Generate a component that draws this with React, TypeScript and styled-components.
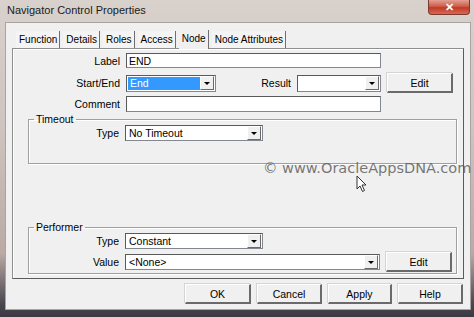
import * as React from 'react';
import styled, {createGlobalStyle} from 'styled-components';

const GlobalStyle = createGlobalStyle`
    html, body { margin: 0; padding: 0; background: #3b3a42; }
    body { font-family: "Liberation Sans", Arial, sans-serif; font-size: 10.5px; color: #000; }
`;

const Frame = styled.div`
    position: relative; width: 474px; height: 317px; overflow: hidden;
    display: flex; flex-direction: column;
    background: linear-gradient(180deg, #d9d1cc 0%, #cfc4bf 40%, #b9aaa4 80%, #4a4650 96%, #3a3842 100%);
`;

const TitleBar = styled.div`
    height: 22px; display: flex; align-items: flex-start; padding-left: 7px;
`;

const Title = styled.div`
    margin-top: 4px; font-size: 11px; color: #1a1a1a;
`;

const CloseButton = styled.div`
    margin-left: auto; margin-right: 4px; width: 42px; height: 15px;
    border: 1px solid #7a3a32; border-top: none; border-radius: 0 0 4px 4px;
    background: linear-gradient(180deg, #e3a092 0%, #cf5d48 45%, #c0392a 55%, #d8684f 100%);
    display: flex; align-items: center; justify-content: center;
    color: #fff; font-weight: bold; font-size: 11px; box-sizing: border-box;
`;

const Client = styled.div`
    margin: 0 3px 0 5px; height: 288px; background: #f0f0f0;
    border: 1px solid #a9a4a3; box-sizing: border-box;
    padding: 7px 6px 0 6px; display: flex; flex-direction: column;
`;

const TabStrip = styled.div`
    display: flex; align-items: flex-end; height: 18px; padding-left: 4px; font-size: 10px;
`;

const Tab = styled.div<{$active?: boolean}>`
    height: ${p => p.$active ? 19 : 17}px; padding: 0 2px 0 3px; margin-right: 3px;
    display: flex; align-items: center; box-sizing: border-box;
    background: ${p => p.$active ? '#f0f0f0' : '#f4f4f4'};
    border-right: 1px solid #6f6f6f;
    margin-bottom: ${p => p.$active ? -1 : 0}px;
    position: relative; z-index: ${p => p.$active ? 2 : 1};
    padding-bottom: ${p => p.$active ? 3 : 0}px;
`;

const Panel = styled.div`
    position: relative; height: 231px; box-sizing: border-box;
    border: 1px solid #8e8f8f; border-right-color: #5b5b5b; border-bottom-color: #5b5b5b;
    box-shadow: inset 1px 1px 0 #fff;
    padding-top: 4px; display: flex; flex-direction: column;
`;

const Row = styled.div<{$mt?: number}>`
    display: flex; align-items: center; margin-top: ${p => p.$mt ?? 0}px;
`;

const FieldLabel = styled.div<{$w: number}>`
    width: ${p => p.$w}px; text-align: right; margin-right: 6px; flex-shrink: 0;
`;

const TextBox = styled.div<{$w: number; $h?: number}>`
    width: ${p => p.$w}px; height: ${p => p.$h ?? 16}px; box-sizing: border-box;
    background: #fff; border: 1px solid #828790; border-top-color: #5a5a5a; border-left-color: #5a5a5a;
    display: flex; align-items: center; padding-left: 2px;
`;

const Select = styled(TextBox)`
    padding-left: 1px; padding-right: 1px;
`;

const SelectValue = styled.div<{$selected?: boolean}>`
    flex: 1; height: 13px; display: flex; align-items: center; padding-left: 2px;
    background: ${p => p.$selected ? '#3399ff' : 'transparent'};
    color: ${p => p.$selected ? '#fff' : '#000'};
`;

const DropButton = styled.div`
    width: 14px; height: 14px; box-sizing: border-box; background: #f0f0f0;
    border: 1px solid #fff; border-right-color: #6a6a6a; border-bottom-color: #6a6a6a;
    display: flex; align-items: center; justify-content: center;
    &::after {
        content: ''; width: 0; height: 0;
        border-left: 3px solid transparent; border-right: 3px solid transparent; border-top: 3px solid #000;
    }
`;

const Button = styled.div<{$w: number}>`
    width: ${p => p.$w}px; height: 20px; box-sizing: border-box; flex-shrink: 0;
    background: #f0f0f0; border: 1px solid #fff;
    border-right: 2px solid #6a6a6a; border-bottom: 2px solid #6a6a6a;
    box-shadow: -1px -1px 0 #d4d4d4;
    display: flex; align-items: center; justify-content: center;
`;

const Group = styled.fieldset<{$h: number}>`
    margin: 0 0 0 15px; width: 429px; height: ${p => p.$h}px; box-sizing: border-box;
    border: 1px solid #a0a0a0; box-shadow: 1px 1px 0 #fff, inset 1px 1px 0 #fff;
    padding: 0; display: flex; flex-direction: column;
`;

const Legend = styled.legend`
    padding: 0 2px; margin-left: 5px; font-size: 10.5px; line-height: 11px;
`;

const Spacer = styled.div<{$w: number}>`
    width: ${p => p.$w}px; flex-shrink: 0;
`;

const Watermark = styled.div`
    position: absolute; left: 250px; top: 111px; white-space: nowrap;
    font-family: "DejaVu Sans", Verdana, sans-serif; font-size: 14.5px; color: rgba(95, 95, 95, 0.85);
`;

const Cursor = styled.svg`
    position: absolute; left: 343px; top: 126px;
`;

const ButtonBar = styled.div`
    display: flex; justify-content: flex-end; gap: 6px; margin-top: 5px; padding-right: 1px;
`;

const DropSelect = ({w, h, value, selected}: {w: number; h?: number; value: string; selected?: boolean}) => (
    <Select $w={w} $h={h}>
        <SelectValue $selected={selected}>{value}</SelectValue>
        <DropButton />
    </Select>
);

const tabs = ['Function', 'Details', 'Roles', 'Access', 'Node', 'Node Attributes'];

export default function App() {
    return (<Frame>
        <GlobalStyle />
        <TitleBar>
            <Title>Navigator Control Properties</Title>
            <CloseButton>✕</CloseButton>
        </TitleBar>
        <Client>
            <TabStrip>
                {tabs.map(t => <Tab key={t} $active={t === 'Node'}>{t}</Tab>)}
            </TabStrip>
            <Panel>
                <Row>
                    <FieldLabel $w={107}>Label</FieldLabel>
                    <TextBox $w={255} $h={15}>END</TextBox>
                </Row>
                <Row $mt={5}>
                    <FieldLabel $w={107}>Start/End</FieldLabel>
                    <DropSelect w={90} h={17} value="End" selected />
                    <FieldLabel $w={75}>Result</FieldLabel>
                    <DropSelect w={84} h={17} value="" />
                    <Spacer $w={6} />
                    <Button $w={66}>Edit</Button>
                </Row>
                <Row $mt={3}>
                    <FieldLabel $w={107}>Comment</FieldLabel>
                    <TextBox $w={255} />
                </Row>
                <Row $mt={2}>
                    <Group $h={50}>
                        <Legend>Timeout</Legend>
                        <Row>
                            <FieldLabel $w={90}>Type</FieldLabel>
                            <DropSelect w={138} value="No Timeout" />
                        </Row>
                    </Group>
                </Row>
                <Row $mt={58}>
                    <Group $h={52}>
                        <Legend>Performer</Legend>
                        <Row>
                            <FieldLabel $w={90}>Type</FieldLabel>
                            <DropSelect w={138} value="Constant" />
                        </Row>
                        <Row $mt={3}>
                            <FieldLabel $w={90}>Value</FieldLabel>
                            <DropSelect w={255} value="<None>" />
                            <Spacer $w={6} />
                            <Button $w={66}>Edit</Button>
                        </Row>
                    </Group>
                </Row>
                <Watermark>© www.OracleAppsDNA.com</Watermark>
                <Cursor width="12" height="18" viewBox="0 0 12 18">
                    <path d="M1 1 L1 14 L4 11 L6.5 16.5 L8.5 15.5 L6 10 L10 10 Z" fill="#fff" stroke="#333" strokeWidth="1" />
                </Cursor>
            </Panel>
            <ButtonBar>
                <Button $w={66}>OK</Button>
                <Button $w={65}>Cancel</Button>
                <Button $w={64}>Apply</Button>
                <Button $w={65}>Help</Button>
            </ButtonBar>
        </Client>
    </Frame>);
}
